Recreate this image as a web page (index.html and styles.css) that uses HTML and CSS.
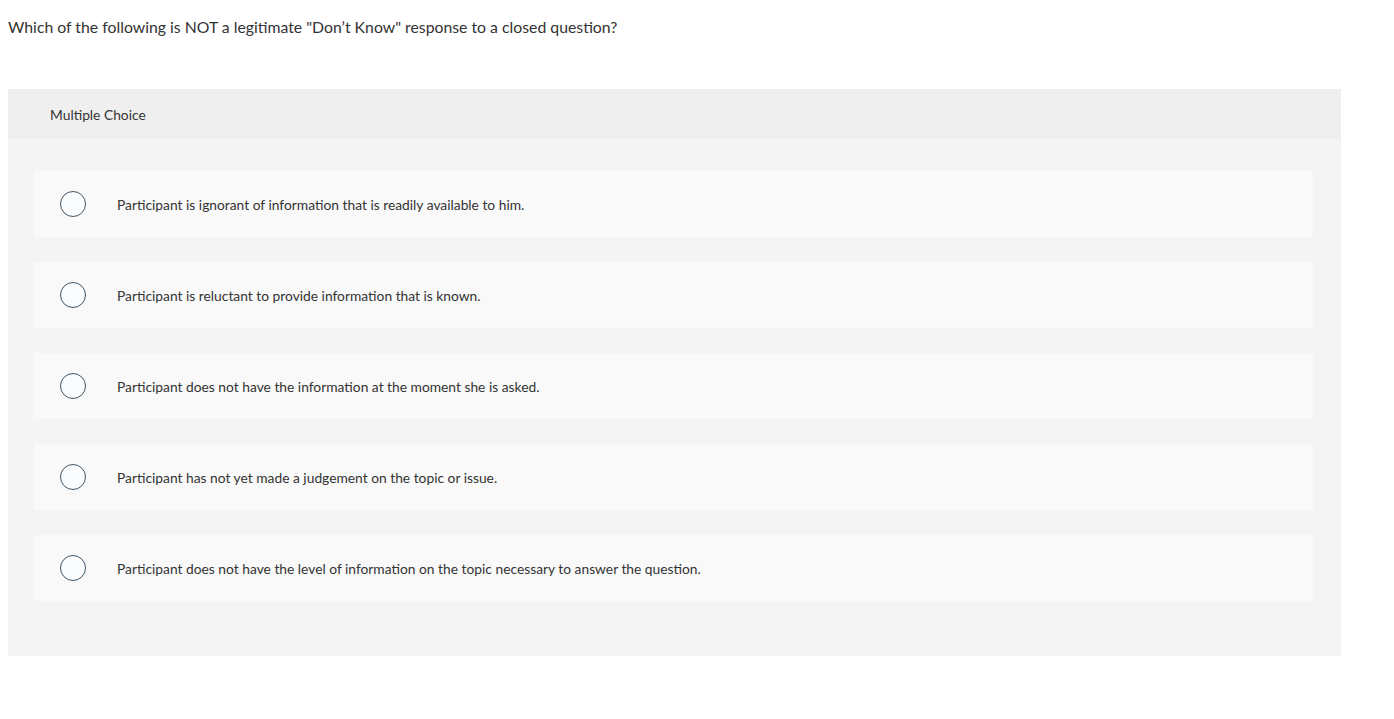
FILE: index.html
```html
<!DOCTYPE html>
<html>
<head>
<meta charset="utf-8">
<link rel="stylesheet" href="styles.css">
</head>
<body>
<p class="question">Which of the following is NOT a legitimate "Don’t Know" response to a closed question?</p>
<div class="panel">
  <div class="panel-header">Multiple Choice</div>
  <div class="panel-body">
    <div class="option"><span class="radio"></span><span class="label">Participant is ignorant of information that is readily available to him.</span></div>
    <div class="option"><span class="radio"></span><span class="label">Participant is reluctant to provide information that is known.</span></div>
    <div class="option"><span class="radio"></span><span class="label">Participant does not have the information at the moment she is asked.</span></div>
    <div class="option"><span class="radio"></span><span class="label">Participant has not yet made a judgement on the topic or issue.</span></div>
    <div class="option"><span class="radio"></span><span class="label">Participant does not have the level of information on the topic necessary to answer the question.</span></div>
  </div>
</div>
</body>
</html>
```
FILE: styles.css
```css
html, body {
  margin: 0;
  padding: 0;
  background: #ffffff;
}
body {
  padding: 0 8px;
  font-family: "Lato", "Liberation Sans", sans-serif;
  color: #333333;
}
.question {
  margin: 0;
  padding-top: 17px;
  height: 89px;
  box-sizing: border-box;
  font-size: 15.8px;
  line-height: 20px;
  color: #333;
}
.panel {
  width: 1333px;
  background: #f4f4f4;
}
.panel-header {
  height: 50px;
  background: #efefef;
  display: flex;
  align-items: center;
  padding-left: 42px;
  font-size: 13.8px;
  color: #333;
}
.panel-body {
  display: flex;
  flex-direction: column;
  gap: 25px;
  padding: 32px 28px 55px 26px;
}
.option {
  height: 66px;
  background: #f9f9f9;
  display: flex;
  align-items: center;
  padding-left: 25px;
}
.radio {
  width: 24px;
  height: 24px;
  border: 1.5px solid #3f5566;
  border-radius: 50%;
  background: #fbfcfd;
  flex: none;
  margin-left: 1px;
}
.label {
  margin-left: 31px;
  font-size: 13.8px;
  color: #333;
}
```
